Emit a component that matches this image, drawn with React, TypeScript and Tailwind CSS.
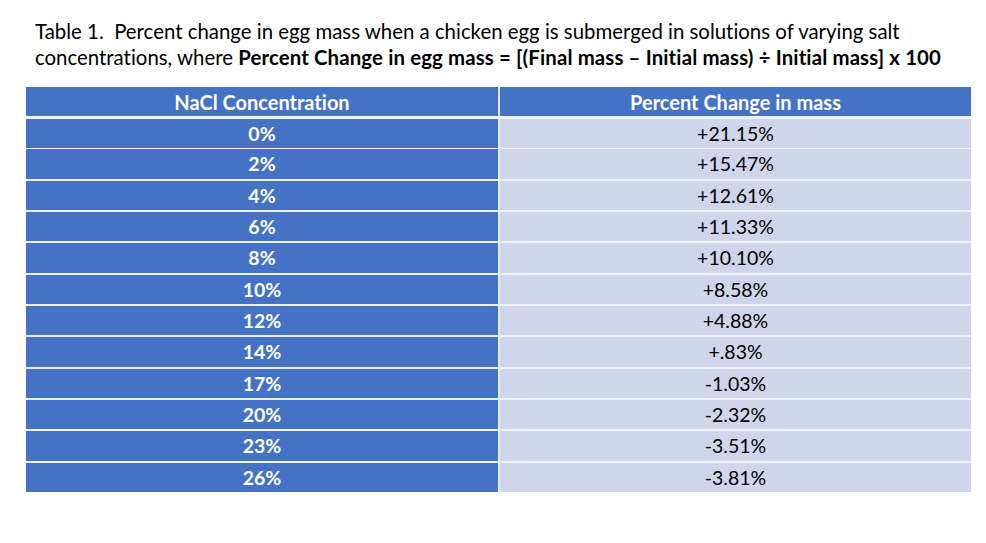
import React from "react";

const rows: [string, string][] = [
  ["0%", "+21.15%"],
  ["2%", "+15.47%"],
  ["4%", "+12.61%"],
  ["6%", "+11.33%"],
  ["8%", "+10.10%"],
  ["10%", "+8.58%"],
  ["12%", "+4.88%"],
  ["14%", "+.83%"],
  ["17%", "-1.03%"],
  ["20%", "-2.32%"],
  ["23%", "-3.51%"],
  ["26%", "-3.81%"],
];

export default function App() {
  return (
    <div
      className="w-[986px] h-[543px] bg-white overflow-hidden [font-variant-ligatures:none]"
      style={{ fontFamily: "Lato, 'Open Sans', sans-serif" }}
    >
      <div className="pl-[35px] pt-[18px] text-[20.4px] leading-[26px] text-black whitespace-nowrap">
        <div>
          Table 1.&nbsp; Percent change in egg mass when a chicken egg is submerged in solutions of varying salt
        </div>
        <div>
          concentrations, where{" "}
          <span className="font-bold tracking-[0.13px]">
            Percent Change in egg mass = [(Final mass – Initial mass) ÷ Initial mass] x 100
          </span>
        </div>
      </div>
      <div className="ml-[26px] mt-[17px] w-[945px]">
        <div className="grid grid-cols-[472px_2px_471px] h-[29px] bg-[#4472C4] text-white font-bold text-[20px]">
          <div className="flex items-center justify-center">NaCl Concentration</div>
          <div className="bg-[#dfe5f3]" />
          <div className="flex items-center justify-center">Percent Change in mass</div>
        </div>
        {rows.map(([a, b], i) => (
          <div
            key={a}
            className={`grid grid-cols-[472px_2px_471px] h-[31.33px] ${
              i === 0 ? "border-t-[3px]" : "border-t-2"
            } border-[#eef1f8] text-[19.5px]`}
          >
            <div className="bg-[#4472C4] text-white font-bold flex items-center justify-center">{a}</div>
            <div className="bg-[#e6eaf5]" />
            <div className="bg-[#CFD5EA] text-black flex items-center justify-center">{b}</div>
          </div>
        ))}
      </div>
    </div>
  );
}
